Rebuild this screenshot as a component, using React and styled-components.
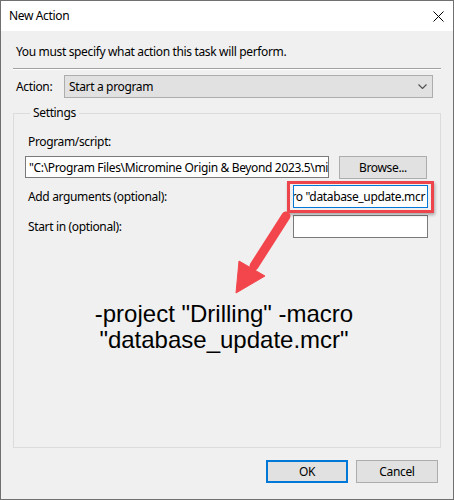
import React from 'react';
import styled, { createGlobalStyle } from 'styled-components';

const GlobalStyle = createGlobalStyle`
    html, body {
        margin: 0;
        padding: 0;
        background: #ffffff;
    }
    * {
        box-sizing: border-box;
    }
`;

const Page = styled.div`
    position: relative;
    width: 454px;
    height: 500px;
    font-family: "Noto Sans", "Open Sans", sans-serif;
    font-size: 12px;
    letter-spacing: -0.35px;
    color: #000000;
`;

const Window = styled.div`
    display: flex;
    flex-direction: column;
    width: 454px;
    height: 500px;
    border: 1px solid #707070;
    background: #f0f0f0;
`;

const TitleBar = styled.div`
    display: flex;
    align-items: center;
    justify-content: space-between;
    height: 30px;
    padding: 0 9px 0 8px;
    background: #ffffff;
    line-height: 16px;
`;

const Body = styled.div`
    flex: 1;
    display: flex;
    flex-direction: column;
    padding: 0 12px;
`;

const Prompt = styled.div`
    margin-top: 13px;
    padding-left: 3px;
    line-height: 16px;
`;

const Separator = styled.div`
    margin-top: 8px;
    height: 2px;
    border-top: 1px solid #a0a0a0;
    border-bottom: 1px solid #ffffff;
`;

const ActionRow = styled.div`
    display: flex;
    align-items: center;
    margin-top: 5px;
    padding-right: 8px;
`;

const Label = styled.div`
    padding-left: 3px;
    line-height: 16px;
    width: ${(p) => p.$width || 'auto'};
    flex-shrink: 0;
`;

const Combo = styled.div`
    flex: 1;
    display: flex;
    align-items: center;
    justify-content: space-between;
    height: 23px;
    padding: 0 5px 0 4px;
    background: #e1e1e1;
    border: 1px solid #adadad;
`;

const Group = styled.fieldset`
    flex: 1;
    display: flex;
    flex-direction: column;
    margin: 7px 0 0 0;
    padding: 0 12px 0 11px;
    border: 1px solid #dcdcdc;
    min-width: 0;
`;

const Legend = styled.legend`
    margin-left: 5px;
    padding: 0 3px;
    line-height: 16px;
`;

const FieldLabel = styled.div`
    margin-top: 13px;
    padding-left: 3px;
    line-height: 16px;
`;

const ProgramRow = styled.div`
    display: flex;
    align-items: flex-start;
    gap: 10px;
    margin-top: 6px;
`;

const TextBox = styled.div`
    display: flex;
    align-items: center;
    justify-content: ${(p) => (p.$scrolled ? 'flex-end' : 'flex-start')};
    width: ${(p) => p.$width || '135px'};
    height: ${(p) => p.$height || '23px'};
    padding: 0 2px 0 3px;
    background: #ffffff;
    border: 1px solid ${(p) => (p.$focused ? '#0078d7' : '#7a7a7a')};
    white-space: nowrap;
    overflow: hidden;
    flex-shrink: 0;
`;

const Button = styled.div`
    display: flex;
    align-items: center;
    justify-content: center;
    width: ${(p) => p.$width || '82px'};
    height: 23px;
    background: #e1e1e1;
    border: ${(p) => (p.$default ? '2px solid #0078d7' : '1px solid #adadad')};
    flex-shrink: 0;
`;

const FieldRow = styled.div`
    display: grid;
    grid-template-columns: 1fr 135px;
    align-items: center;
    margin-top: ${(p) => p.$top || '6px'};
`;

const Highlight = styled.div`
    position: relative;

    &::after {
        content: '';
        position: absolute;
        top: -4px;
        bottom: -5px;
        left: -6px;
        right: -6px;
        border: 3px solid #ee444c;
        box-shadow: 1px 2px 3px rgba(0, 0, 0, 0.3);
        pointer-events: none;
    }
`;

const Callout = styled.div`
    margin-top: 63px;
    padding-right: 5px;
    text-align: center;
    font-family: "Liberation Sans", Arial, sans-serif;
    font-size: 24px;
    line-height: 26px;
    letter-spacing: normal;
`;

const Footer = styled.div`
    display: flex;
    justify-content: flex-end;
    gap: 8px;
    padding: 12px 3px 16px 0;
`;

const Arrow = styled.svg`
    position: absolute;
    top: 0;
    left: 0;
    pointer-events: none;
`;

function App() {
    return (
        <Page>
            <GlobalStyle />
            <Window>
                <TitleBar>
                    <span>New Action</span>
                    <svg width="11" height="11" viewBox="0 0 11 11">
                        <path d="M0.5 0.5 L10.5 10.5 M10.5 0.5 L0.5 10.5" stroke="#000" strokeWidth="1" />
                    </svg>
                </TitleBar>
                <Body>
                    <Prompt>You must specify what action this task will perform.</Prompt>
                    <Separator />
                    <ActionRow>
                        <Label $width="51px">Action:</Label>
                        <Combo>
                            <span>Start a program</span>
                            <svg width="9" height="5" viewBox="0 0 9 5">
                                <path d="M0.5 0.5 L4.5 4.5 L8.5 0.5" stroke="#555" strokeWidth="1.2" fill="none" />
                            </svg>
                        </Combo>
                    </ActionRow>
                    <Group>
                        <Legend>Settings</Legend>
                        <FieldLabel>Program/script:</FieldLabel>
                        <ProgramRow>
                            <TextBox $width="304px" $height="22px">
                                "C:\Program Files\Micromine Origin &amp; Beyond 2023.5\micromine.exe"
                            </TextBox>
                            <Button $width="88px">Browse...</Button>
                        </ProgramRow>
                        <FieldRow $top="6px">
                            <Label>Add arguments (optional):</Label>
                            <Highlight>
                                <TextBox $focused $scrolled>
                                    -project "Drilling" -macro "database_update.mcr
                                </TextBox>
                            </Highlight>
                        </FieldRow>
                        <FieldRow $top="7px">
                            <Label>Start in (optional):</Label>
                            <TextBox />
                        </FieldRow>
                        <Callout>
                            -project "Drilling" -macro
                            <br />
                            "database_update.mcr"
                        </Callout>
                    </Group>
                    <Footer>
                        <Button $default>OK</Button>
                        <Button>Cancel</Button>
                    </Footer>
                </Body>
            </Window>
            <Arrow width="454" height="500" viewBox="0 0 454 500">
                <g fill="#f2464c" stroke="#f2464c">
                    <line x1="286" y1="216" x2="254" y2="266" strokeWidth="9" strokeLinecap="round" />
                    <polygon points="236,293 239,261 265,276" strokeWidth="1" strokeLinejoin="round" />
                </g>
            </Arrow>
        </Page>
    );
}

export default App;
